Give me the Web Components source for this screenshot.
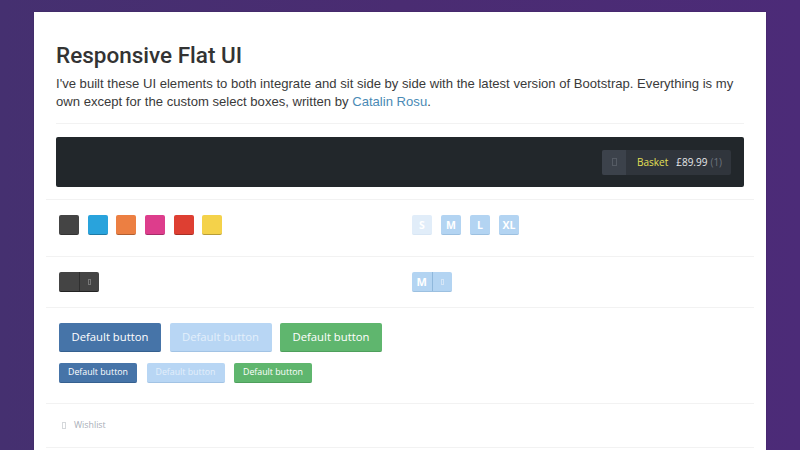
<!DOCTYPE html>
<html><head><meta charset="utf-8">
<style>
html,body{margin:0;padding:0;height:450px;overflow:hidden}
body{background:linear-gradient(90deg,#453070 0%,#4a2c72 50%,#4c2b78 100%);font-family:"Liberation Sans",sans-serif}
</style></head><body>
<flat-page>
  <h-head slot="head"></h-head>
  <basket-bar></basket-bar>
  <ui-row style="--h:57px;--pt:15px"><swatch-set></swatch-set><size-set></size-set></ui-row>
  <ui-row style="--h:51px;--pt:15px"><split-btn c="#444" d="#222" line="#2f2f2f" ic="#777"></split-btn><split-btn c="#b3d4f2" d="#9cc0e0" line="#8fb8dc" ic="#d4e5f6" label="M"></split-btn></ui-row>
  <btn-row></btn-row>
  <wish-row></wish-row>
</flat-page>
<script>
function def(name,html){customElements.define(name,class extends HTMLElement{
  constructor(){super();this.attachShadow({mode:'open'}).innerHTML=typeof html==='function'?html(this):html;}
})}
const tofu=(c,w=5,h=8)=>`<svg width="${w}" height="${h}" viewBox="0 0 ${w} ${h}" style="display:block"><rect x=".5" y=".5" width="${w-1}" height="${h-1}" fill="none" stroke="${c}"/></svg>`;
def('flat-page',`<style>
:host{display:block;box-sizing:border-box;width:732px;height:438px;margin:12px auto 0 34px;background:#fff;padding:0 12px;overflow:hidden;box-shadow:0 0 1px rgba(0,0,0,.3)}
</style><slot name="head"></slot><slot></slot>`);
def('h-head',`<style>
:host{display:block;margin:0 10px;padding-top:30px;height:81px;border-bottom:1px solid #f2f2f2;color:#333}
h1{font:500 22.5px/26px Roboto,sans-serif;margin:0 0 7px;color:#333}
p{margin:0;font:13.1px/18px "Liberation Sans",sans-serif;color:#3a3a3a}
a{color:#4a8ab5;text-decoration:none}
</style><h1>Responsive Flat UI</h1><p>I've built these UI elements to both integrate and sit side by side with the latest version of Bootstrap. Everything is my own except for the custom select boxes, written by <a href="#">Catalin Rosu</a>.</p>`);
def('basket-bar',`<style>
:host{display:flex;justify-content:flex-end;align-items:center;box-sizing:border-box;margin:13px 10px 12px;height:50px;background:#22272b;border-radius:2px;padding-right:13px;font:10px/25px "Open Sans",sans-serif}
.b{display:flex;height:25px;width:129px;background:#30353c;border-radius:2px;color:#e6e8ea}
.i{width:24px;background:#3c424b;display:flex;align-items:center;justify-content:center;border-radius:2px 0 0 2px}
.y{color:#e4e056;margin:0 8px 0 11px}.m{color:#6d747c;margin:0 0 0 3px}
</style><div class="b"><div class="i">${tofu('#555b64')}</div><span class="y">Basket</span><span>£89.99</span><span class="m">(1)</span></div>`);
def('ui-row',`<style>
:host{display:grid;grid-template-columns:353px 1fr;height:var(--h);box-sizing:border-box;padding:var(--pt) 13px 0;border-top:1px solid #f2f2f2}
</style><slot></slot>`);
def('swatch-set',`<style>
:host{display:flex;gap:8.7px}
i{display:block;box-sizing:border-box;width:20px;height:20px;border-radius:2px;border-bottom:1px solid rgba(0,0,0,.25)}
i:first-child{border-bottom-color:#222}
</style>`+['#444444','#29a3dc','#ec7f42','#dd3d8c','#de3f32','#f4d24a'].map(c=>`<i style="background:${c}"></i>`).join(''));
def('size-set',`<style>
:host{display:flex;gap:9px;font:700 10.5px/20px "Open Sans",sans-serif;color:#fff}
span{box-sizing:border-box;width:20px;height:20px;background:#b3d4f2;border-radius:2px;text-align:center;border-bottom:1px solid #9cc0e0}
.o{background:#e1edf9;border-color:#d8e6f4}
</style><span class="o">S</span><span>M</span><span>L</span><span>XL</span>`);
def('split-btn',h=>{const c=h.getAttribute('c'),d=h.getAttribute('d'),l=h.getAttribute('line'),ic=h.getAttribute('ic'),t=h.getAttribute('label')||'';return `<style>
:host{display:flex;width:40px;height:20px;box-sizing:border-box;background:${c};border-radius:2px;border-bottom:1px solid ${d};font:700 11px/20px "Open Sans",sans-serif;color:#fff}
div{flex:1;display:flex;align-items:center;justify-content:center}
div+div{border-left:1px solid ${l}}
</style><div>${t}</div><div>${tofu(ic,3,6)}</div>`});
def('btn-row',`<style>
:host{display:block;box-sizing:border-box;height:96px;padding:15px 13px 0;border-top:1px solid #f2f2f2;font-family:"Open Sans",sans-serif}
.r{display:flex}.l{margin-bottom:11px;gap:8.5px}.s{gap:9.5px}
span{display:block;box-sizing:border-box;color:#fff;border-radius:2px;white-space:nowrap;text-align:center}
.l span{height:29px;font-size:11.3px;line-height:28px;width:102px}
.s span{height:20px;font-size:8.8px;line-height:19px;width:78px}
.a{background:#4674a8;border-bottom:1px solid #35608f}.b{background:#b8d6f4;border-bottom:1px solid #a2c3e4;color:#e3effb}.c{background:#5fb66e;border-bottom:1px solid #4e9f5c}
</style><div class="r l"><span class="a">Default button</span><span class="b">Default button</span><span class="c">Default button</span></div>
<div class="r s"><span class="a">Default button</span><span class="b">Default button</span><span class="c">Default button</span></div>`);
def('wish-row',`<style>
:host{display:flex;align-items:center;box-sizing:border-box;height:45px;padding:0 16px 1px;border-top:1px solid #f2f2f2;border-bottom:1px solid #f2f2f2;font:8.8px "Open Sans",sans-serif;color:#a9aeb8;gap:8px}
</style>${tofu('#d5d8db',4,7)}<span>Wishlist</span>`);
</script>
</body></html>
